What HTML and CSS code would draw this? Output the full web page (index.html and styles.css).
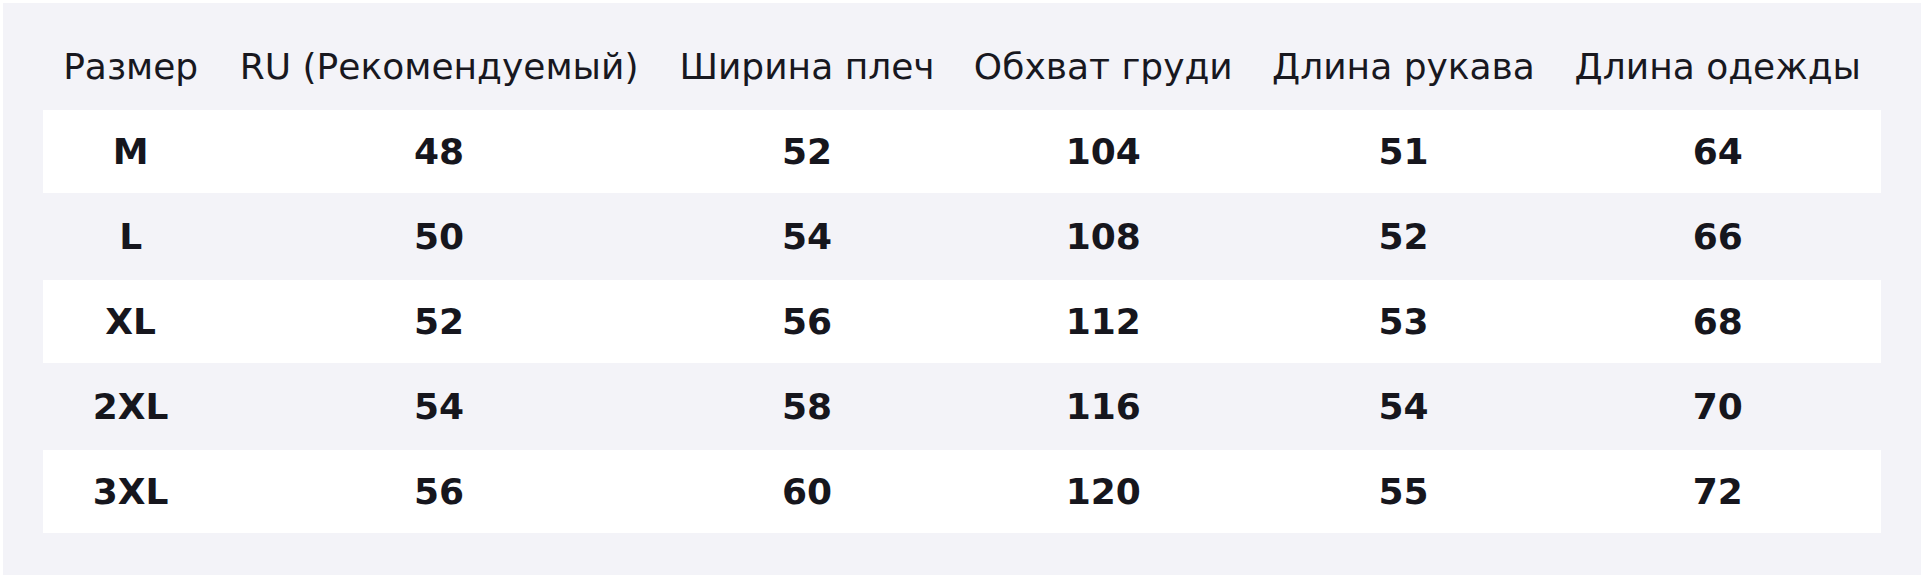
FILE: index.html
```html
<!DOCTYPE html>
<html lang="ru">
<head>
<meta charset="utf-8">
<title>Таблица размеров</title>
<link rel="stylesheet" href="styles.css">
</head>
<body>
<div class="size-chart">
  <table class="size-table">
    <thead>
      <tr>
        <th>Размер</th>
        <th>RU (Рекомендуемый)</th>
        <th>Ширина плеч</th>
        <th>Обхват груди</th>
        <th>Длина рукава</th>
        <th>Длина одежды</th>
      </tr>
    </thead>
    <tbody>
      <tr class="row-light"><td>M</td><td>48</td><td>52</td><td>104</td><td>51</td><td>64</td></tr>
      <tr><td>L</td><td>50</td><td>54</td><td>108</td><td>52</td><td>66</td></tr>
      <tr class="row-light"><td>XL</td><td>52</td><td>56</td><td>112</td><td>53</td><td>68</td></tr>
      <tr><td>2XL</td><td>54</td><td>58</td><td>116</td><td>54</td><td>70</td></tr>
      <tr class="row-light"><td>3XL</td><td>56</td><td>60</td><td>120</td><td>55</td><td>72</td></tr>
    </tbody>
  </table>
</div>
</body>
</html>
```
FILE: styles.css
```css
html, body {
  margin: 0;
  padding: 0;
  background: #ffffff;
}

body {
  font-family: "DejaVu Sans", "Liberation Sans", sans-serif;
  color: #16161d;
}

.size-chart {
  margin: 3px;
  width: 1918px;
  height: 572px;
  box-sizing: border-box;
  padding: 40px;
  background: #f3f3f8;
}

.size-table {
  width: 100%;
  border-collapse: separate;
  border-spacing: 0 2px;
}

.size-table th {
  font-size: 36px;
  font-weight: normal;
  line-height: 42px;
  height: 63px;
  box-sizing: border-box;
  padding: 1px 16px 0;
  vertical-align: top;
  text-align: center;
  white-space: nowrap;
  color: #18181f;
}

.size-table td {
  font-size: 36px;
  font-weight: bold;
  line-height: 42px;
  height: 83px;
  box-sizing: border-box;
  padding: 0 16px;
  vertical-align: middle;
  text-align: center;
  color: #16161d;
}

.size-table th:first-child,
.size-table td:first-child {
  padding-left: 18px;
  padding-right: 18px;
}

.row-light {
  background: #ffffff;
}
```
